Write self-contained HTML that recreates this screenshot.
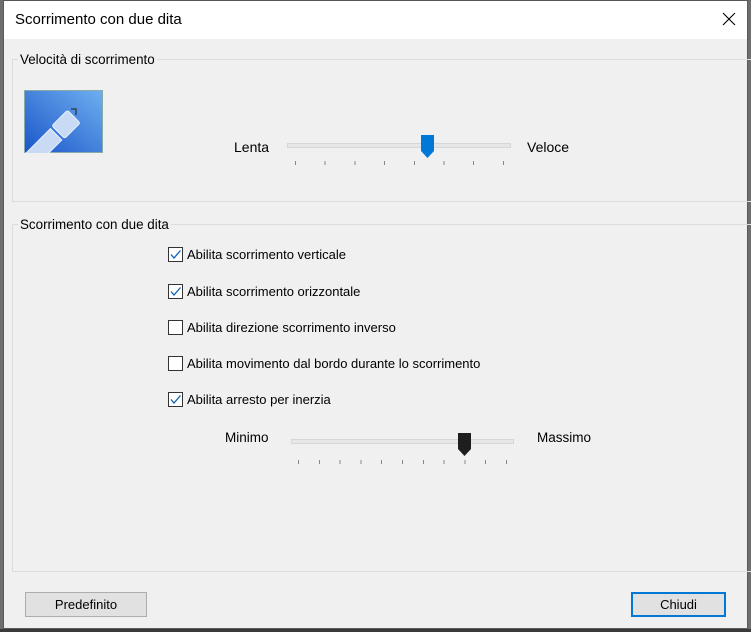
<!DOCTYPE html>
<html><head><meta charset="utf-8"><style>
*{margin:0;padding:0;box-sizing:border-box}
body{width:751px;height:632px;background:#6e6e6e;position:relative;overflow:hidden;font-family:"Liberation Sans",sans-serif;font-size:13px;color:#000}
.a{position:absolute}
#win{left:3px;top:0;width:745px;height:629px;background:#f0f0f0;border:1px solid #5a5a5a;border-top:1px solid #555}
#title{left:0;top:0;width:743px;height:38px;background:#fff}
.grp{border:1px solid #dcdcdc}
.lbl{background:#f0f0f0;padding:0 2px;font-size:13.4px}
.cb{width:15px;height:15px;border:1px solid #333;background:#fff}
.track{height:5px;background:#e7e7e7;border:1px solid #d6d6d6}
.btn{background:#e1e1e1;border:1px solid #adadad;text-align:center;line-height:23px}
</style></head><body>
<div class="a" style="left:0;top:629px;width:751px;height:3px;background:#3a3a3a"></div>
<div class="a" id="win">
 <div class="a" id="title"><span class="a" style="left:11px;top:10px;font-size:15px">Scorrimento con due dita</span>
 <svg class="a" style="left:718px;top:11px" width="14" height="14"><path d="M1 1L13 13M13 1L1 13" stroke="#000" stroke-width="1.1"/></svg></div>
 <div class="a grp" style="left:8px;top:58px;width:741px;height:143px"></div>
 <span class="a lbl" style="left:14px;top:51px">Velocità di scorrimento</span>
 <svg class="a" style="left:20px;top:89px" width="79" height="63">
  <defs><linearGradient id="g" x1="0" y1="1" x2="1" y2="0"><stop offset="0" stop-color="#1a55c8"/><stop offset="1" stop-color="#6fb0f0"/></linearGradient></defs>
  <rect width="79" height="63" fill="url(#g)"/><rect x="0.5" y="0.5" width="78" height="62" fill="none" stroke="#8aa"/>
  <g transform="rotate(-45 30 45)">
   <rect x="-8" y="38" width="40" height="16" fill="#c9daf4" stroke="#e8f0ff"/>
   <rect x="35" y="37" width="22" height="18" rx="2" fill="#c9daf4" stroke="#e8f0ff"/>
  </g>
  <path d="M47 19h5v6" stroke="#345" fill="none" stroke-width="1.5"/>
 </svg>
 <span class="a" style="left:230px;top:138px;font-size:14px">Lenta</span>
 <span class="a" style="left:523px;top:138px;font-size:14px">Veloce</span>
 <div class="a track" style="left:283px;top:142px;width:224px"></div>
 <svg class="a" style="left:417px;top:134px" width="13" height="23"><path d="M0 0H13V16L6.5 23L0 16Z" fill="#0078d7"/></svg>
 <div class="a" style="left:291px;top:160px;width:212px;height:4px;background:repeating-linear-gradient(90deg,#888 0 1px,transparent 1px 29.7px)"></div>
 <div class="a grp" style="left:8px;top:223px;width:741px;height:348px"></div>
 <span class="a lbl" style="left:14px;top:216px">Scorrimento con due dita</span>
 <span class="a" style="left:221px;top:429px;font-size:13.5px">Minimo</span>
 <span class="a" style="left:533px;top:429px;font-size:13.5px">Massimo</span>
 <div class="a track" style="left:287px;top:438px;width:223px"></div>
 <svg class="a" style="left:454px;top:432px" width="13" height="23"><path d="M0 0H13V16L6.5 23L0 16Z" fill="#1e1e1e"/></svg>
 <div class="a" style="left:294px;top:459px;width:210px;height:4px;background:repeating-linear-gradient(90deg,#888 0 1px,transparent 1px 20.8px)"></div>
 <div class="a btn" style="left:21px;top:591px;width:122px;height:25px">Predefinito</div>
 <div class="a btn" style="left:627px;top:591px;width:95px;height:25px;border:2px solid #0078d7;line-height:21px">Chiudi</div>
</div>
<div class="a cb" style="left:168px;top:247px"></div><svg class="a" style="left:168px;top:247px" width="15" height="15"><path d="M3 7.5L6 11L12.5 3.5" stroke="#0a5fb4" stroke-width="1.3" fill="none"/></svg><span class="a" style="left:187px;top:247px">Abilita scorrimento verticale</span>
<div class="a cb" style="left:168px;top:284px"></div><svg class="a" style="left:168px;top:284px" width="15" height="15"><path d="M3 7.5L6 11L12.5 3.5" stroke="#0a5fb4" stroke-width="1.3" fill="none"/></svg><span class="a" style="left:187px;top:284px">Abilita scorrimento orizzontale</span>
<div class="a cb" style="left:168px;top:320px"></div><span class="a" style="left:187px;top:320px">Abilita direzione scorrimento inverso</span>
<div class="a cb" style="left:168px;top:356px"></div><span class="a" style="left:187px;top:356px">Abilita movimento dal bordo durante lo scorrimento</span>
<div class="a cb" style="left:168px;top:392px"></div><svg class="a" style="left:168px;top:392px" width="15" height="15"><path d="M3 7.5L6 11L12.5 3.5" stroke="#0a5fb4" stroke-width="1.3" fill="none"/></svg><span class="a" style="left:187px;top:392px">Abilita arresto per inerzia</span>
</body></html>
